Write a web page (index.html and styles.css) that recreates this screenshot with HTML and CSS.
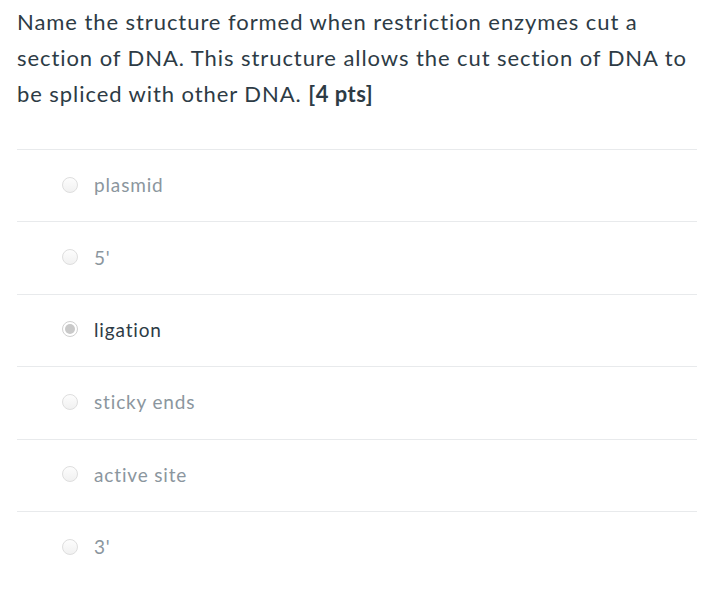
FILE: index.html
```html
<!DOCTYPE html>
<html>
<head>
<meta charset="utf-8">
<link rel="stylesheet" href="styles.css">
</head>
<body>
<div class="question">
  <p class="prompt">Name the structure formed when restriction enzymes cut a section of DNA. This structure allows the cut section of DNA to be spliced with other DNA. <strong>[4 pts]</strong></p>
  <div class="answers">
    <div class="answer"><span class="radio"></span><span class="label">plasmid</span></div>
    <div class="answer"><span class="radio"></span><span class="label">5'</span></div>
    <div class="answer selected"><span class="radio"></span><span class="label">ligation</span></div>
    <div class="answer"><span class="radio"></span><span class="label">sticky ends</span></div>
    <div class="answer"><span class="radio"></span><span class="label">active site</span></div>
    <div class="answer"><span class="radio"></span><span class="label">3'</span></div>
  </div>
</div>
</body>
</html>
```
FILE: styles.css
```css
html, body {
  margin: 0;
  padding: 0;
  background: #ffffff;
}
body {
  font-family: Lato, "Open Sans", sans-serif;
  color: #2d3b45;
}
.question {
  padding: 4px 4px 0 17px;
}
.prompt {
  margin: 0;
  font-size: 22px;
  line-height: 36px;
  letter-spacing: 0.93px;
}
.prompt strong {
  font-weight: 700;
  letter-spacing: 0.5px;
}
.answers {
  margin-top: 37px;
  margin-right: 2px;
}
.answer {
  display: flex;
  align-items: center;
  box-sizing: border-box;
  height: 72.4px;
  padding-bottom: 2px;
  border-top: 1px solid #e8eaec;
  padding-left: 45px;
  color: #8b969e;
  font-size: 19px;
  letter-spacing: 0.85px;
}
.radio {
  width: 14px;
  height: 14px;
  border-radius: 50%;
  border: 1px solid #dedede;
  background: linear-gradient(#fdfdfd, #f1f1f1);
  margin-right: 16px;
  box-sizing: content-box;
  flex: none;
  position: relative;
}
.selected {
  color: #2d3b45;
}
.selected .radio {
  border-color: #d0d0d0;
  background: #ffffff;
}
.selected .radio::after {
  content: "";
  position: absolute;
  left: 2px;
  top: 2px;
  width: 10px;
  height: 10px;
  border-radius: 50%;
  background: #c9c9c9;
}
```
